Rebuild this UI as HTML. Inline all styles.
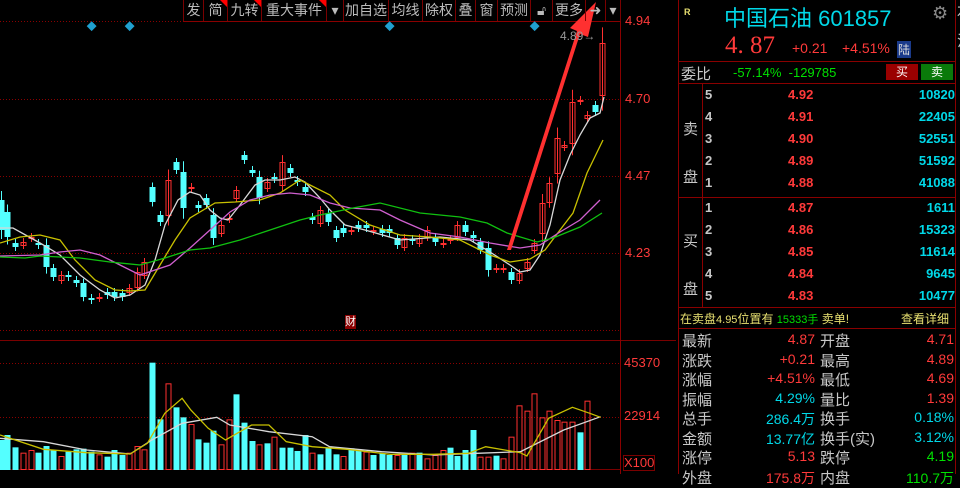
<!DOCTYPE html>
<html><head><meta charset="utf-8"><style>
html,body{margin:0;padding:0;background:#000;width:960px;height:474px;overflow:hidden;font-family:"Liberation Sans","Noto Sans CJK SC",sans-serif}
.a{position:absolute;white-space:nowrap}
#tb{position:absolute;left:183px;top:0;height:21px}
#tb div{position:absolute;top:0;height:21px;border-left:1px solid #7a0000;color:#bbb;font-size:14px;line-height:21px;text-align:center;box-sizing:border-box}
.tri:after{content:"";position:absolute;right:0;top:0;border-top:7px solid #f00;border-left:7px solid transparent}
.c{color:#00d8e8}.r{color:#ff3a3a}.g{color:#00e000}.w{color:#c8c8c8}.y{color:#e8e070}
</style></head><body>
<svg id="s" width="960" height="474" style="position:absolute;left:0;top:0"></svg>
<div id="tb"></div>
<div class="a r" style="left:625px;top:13px;font-size:13px">4.94</div>
<div class="a r" style="left:625px;top:91px;font-size:13px">4.70</div>
<div class="a r" style="left:625px;top:168px;font-size:13px">4.47</div>
<div class="a r" style="left:625px;top:245px;font-size:13px">4.23</div>
<div class="a r" style="left:624px;top:355px;font-size:13px">45370</div>
<div class="a r" style="left:624px;top:408px;font-size:13px">22914</div>
<div class="a r" style="left:623px;top:455px;font-size:13px;border:1px solid #7a0000;line-height:14px">X100</div>
<div class="a w" style="left:560px;top:29px;font-size:12px;color:#999">4.89→</div>
<div class="a" style="left:345px;top:315px;font-size:11px;background:#8a0000;color:#fff;line-height:14px">财</div>
<div class="a y" style="left:684px;top:7px;font-size:9px;font-weight:bold">R</div>
<div class="a c" style="left:724px;top:1px;font-size:22px">中国石油 601857</div>
<div class="a" style="left:932px;top:3px;font-size:18px;color:#888">⚙</div>
<div class="a r" style="left:725px;top:32px;font-size:25px;font-family:'Liberation Serif',serif">4. 87</div>
<div class="a r" style="left:792px;top:40px;font-size:14px">+0.21</div>
<div class="a r" style="left:842px;top:40px;font-size:14px">+4.51%</div>
<div class="a" style="left:897px;top:41px;font-size:12px;background:#1a3a8a;color:#ddd;padding:0 1px">陆</div>
<div class="a w" style="left:681px;top:63px;font-size:15px">委比</div>
<div class="a g" style="left:733px;top:65px;font-size:13px">-57.14%&nbsp;&nbsp;-129785</div>
<div class="a" style="left:886px;top:64px;width:32px;height:16px;background:#9a0000;color:#fff;font-size:12px;text-align:center;line-height:16px">买</div>
<div class="a" style="left:921px;top:64px;width:32px;height:16px;background:#0a7a0a;color:#fff;font-size:12px;text-align:center;line-height:16px">卖</div>
<div class="a w" style="left:683px;top:106px;font-size:15px;line-height:48px">卖<br>盘</div>
<div class="a w" style="left:683px;top:218px;font-size:15px;line-height:48px">买<br>盘</div>
<div id="book"></div>
<div class="a y" style="left:680px;top:310px;font-size:12px">在卖盘<span style="font-size:11px">4.95</span>位置有 <span class="g" style="font-size:11px">15333手</span> 卖单!</div>
<div class="a y" style="left:901px;top:310px;font-size:12px">查看详细</div>
<div id="tbl"></div>
<script>
var tb=[['发',183,203],['简',203,227,1],['九转',227,261,1],['重大事件',261,326,1],['▾',326,343],['加自选',343,388],['均线',388,422],['除权',422,455],['叠',455,475],['窗',475,497],['预测',497,530],['🔓︎',530,552],['更多',552,585],['➜',585,605],['▾',605,620]],tt='';
tb.forEach(b=>tt+=`<div class="${b[3]?'tri':''}" style="left:${b[1]-183}px;width:${b[2]-b[1]}px">${b[0]}</div>`);
tt+=`<div style="left:437px;width:1px"></div>`;
document.getElementById('tb').innerHTML=tt;
var s=document.getElementById('s'),h='';
function L(x1,y1,x2,y2,c,d,w){h+=`<line x1="${x1}" y1="${y1}" x2="${x2}" y2="${y2}" stroke="${c}" stroke-width="${w||1}" ${d?'stroke-dasharray="1 2"':''}/>`}
[21,99,176,253,330,363,417].forEach(y=>L(0,y+.5,620,y+.5,'#8a0000',1));
L(183,21.5,620,21.5,'#8a0000');
L(0,340.5,676,340.5,'#7a0000');
L(620.5,0,620.5,474,'#8a0000');
L(678.5,0,678.5,474,'#8a0000');
L(955.5,0,955.5,474,'#8a0000');
[61,83,197,307,328].forEach(y=>L(678,y+.5,956,y+.5,'#8a0000'));
L(702.5,83,702.5,307,'#8a0000');
L(0,469.5,620,469.5,'#7a0000');
[92,130,390,535].forEach(x=>h+=`<rect x="${x-4}" y="${23}" width="7" height="7" fill="#20a0d0" transform="rotate(45 ${x} 26.5)"/>`);
var C=[[1,200,230,'c'],[7,212,237,'c'],[15,243,247,'c'],[23,242,245,'r'],[31,237,238,'r'],[38,243,245,'c'],[46,245,267,'c'],[53,268,277,'c'],[61,275,280,'r'],[68,275,277,'c'],[76,280,283,'c'],[83,283,297,'c'],[91,298,300,'c'],[99,297,298,'r'],[107,292,295,'c'],[114,292,297,'c'],[122,293,297,'c'],[129,288,292,'r'],[137,272,287,'r'],[144,262,275,'r'],[152,187,202,'c'],[160,215,222,'c'],[168,180,215,'r'],[176,162,170,'c'],[183,172,208,'c'],[191,187,188,'r'],[198,205,208,'c'],[206,198,205,'c'],[213,215,238,'c'],[221,225,233,'r'],[229,218,219,'r'],[236,190,198,'r'],[244,155,160,'c'],[252,170,173,'c'],[259,177,198,'c'],[267,182,188,'r'],[274,177,179,'c'],[282,162,185,'r'],[290,168,173,'c'],[297,180,182,'c'],[305,187,192,'c'],[312,217,220,'c'],[320,210,223,'r'],[328,213,222,'c'],[336,230,238,'c'],[343,228,233,'c'],[351,230,231,'r'],[358,225,228,'c'],[366,225,228,'c'],[373,230,231,'r'],[382,229,233,'c'],[389,229,233,'c'],[397,238,245,'c'],[404,238,247,'r'],[412,239,241,'c'],[419,238,243,'r'],[427,230,237,'r'],[435,237,242,'c'],[443,243,244,'r'],[450,239,240,'r'],[457,225,237,'r'],[465,225,232,'c'],[473,235,238,'c'],[480,242,250,'c'],[488,248,270,'c'],[496,268,269,'r'],[503,268,269,'r'],[511,272,280,'c'],[519,273,280,'r'],[527,262,268,'r'],[534,243,250,'r'],[542,203,233,'r'],[549,183,202,'r'],[557,138,173,'r'],[564,145,147,'r'],[572,102,143,'r'],[580,100,101,'r'],[587,115,118,'r'],[595,105,112,'c'],[602,43,95,'r']];
C.forEach(c=>{var col=c[3]=='c'?'#54ffff':'#ff3030';var e=Math.max(4,(c[2]-c[1])*.3);
L(c[0]+.5,c[1]-e,c[0]+.5,c[2]+e,col);
if(c[3]=='c')h+=`<rect x="${c[0]-2.5}" y="${c[1]}" width="6" height="${Math.max(1,c[2]-c[1])}" fill="${col}"/>`;
else h+=`<rect x="${c[0]-2}" y="${c[1]+.5}" width="5" height="${Math.max(1,c[2]-c[1])}" fill="none" stroke="${col}"/>`;});
function P(pts,c){h+=`<polyline points="${pts}" fill="none" stroke="${c}" stroke-width="1.3"/>`}
P("0,228 13,228 40,243 60,255 80,275 100,290 115,298 130,295 145,285 155,260 165,225 178,200 190,192 200,195 210,210 220,218 228,220 240,205 255,185 265,180 280,180 295,177 305,182 320,198 330,210 345,225 365,230 400,240 440,237 470,240 490,252 510,265 520,272 530,270 540,255 550,225 560,180 570,155 580,135 590,118 600,113 604,97","#d8d8d8");
P("0,243 20,237 40,235 60,240 75,260 95,280 115,290 130,291 145,290 160,265 175,240 190,218 215,203 235,202 260,200 280,193 300,180 310,185 330,195 345,210 370,225 400,235 430,237 460,240 490,255 510,262 530,259 545,250 560,230 573,213 587,173 603,140","#c8c000");
P("0,256 40,255 60,252 80,250 100,255 120,265 140,275 155,270 170,265 190,248 210,230 230,212 250,200 270,195 290,193 310,195 330,203 350,208 380,210 400,220 430,233 460,237 490,243 520,248 540,245 560,232 580,220 600,200","#d060d0");
P("0,257 25,258 40,256 80,258 110,262 140,265 165,258 190,250 210,248 240,240 270,230 300,220 320,215 353,208 380,203 420,213 460,217 487,223 507,233 537,242 553,238 580,227 602,213","#10c010");
h+=`<polygon points="507,250 511,250 580,34 588,37 596,2 570,28 577,31" fill="#ff3030"/>`;
var V="c330 c315 c352 r368 r360 c368 c348 c360 r378 c365 c358 c356 c365 r373 c380 c360 c375 r368 r348 r358 c98 c268 r160 c232 c262 r282 c328 c338 c302 r343 r268 c193 c278 c333 r343 c340 r320 c353 c353 c363 c315 r368 c373 c355 c373 r378 c355 c358 r365 c375 c370 c375 r375 c375 r368 c368 r385 r375 r360 c353 c378 c360 c300 r380 r380 c377 r385 r320 r226 r242 r190 r262 r242 r270 r275 r275 c307 r212".split(' ');
V.forEach((v,i)=>{var x=C[i]?C[i][0]:i*7.63;var t=330+(+v.slice(1))/3;var col=v[0]=='c'?'#54ffff':'#ff3030';
if(v[0]=='c')h+=`<rect x="${x-2.5}" y="${t}" width="6" height="${470-t}" fill="${col}"/>`;else h+=`<rect x="${x-2}" y="${t+.5}" width="5" height="${469-t}" fill="none" stroke="${col}"/>`;});
function VP(a,c){P(a.map(p=>(p[0]/2.306).toFixed(1)+','+(330+p[1]/3).toFixed(1)).join(' '),c)}
VP([[0,325],[100,335],[200,360],[300,372],[350,330],[420,280],[500,262],[530,285],[620,305],[720,320],[760,350],[880,365],[1000,375],[1100,370],[1200,365],[1300,300],[1385,260]],'#d8d8d8');
VP([[0,315],[100,358],[200,368],[300,372],[340,340],[380,250],[420,205],[440,240],[480,295],[520,330],[580,285],[620,285],[660,335],[720,350],[800,358],[900,373],[1000,373],[1080,370],[1120,350],[1200,368],[1215,378],[1265,265],[1320,232],[1360,250],[1385,262]],'#c8c000');
s.innerHTML=h;
var b='',rows=[['5','4.92','10820'],['4','4.91','22405'],['3','4.90','52551'],['2','4.89','51592'],['1','4.88','41088'],['1','4.87','1611'],['2','4.86','15323'],['3','4.85','11614'],['4','4.84','9645'],['5','4.83','10477']];
rows.forEach((r,i)=>{var y=(i<5?87:200)+i%5*22;
b+=`<div class="a w" style="left:705px;top:${y}px;font-size:13px;font-weight:bold">${r[0]}</div><div class="a r" style="left:788px;top:${y}px;font-size:13px;font-weight:bold">${r[1]}</div><div class="a c" style="right:5px;top:${y}px;font-size:13px;font-weight:bold;text-align:right">${r[2]}</div>`});
document.getElementById('book').innerHTML=b;
var T=[['最新','4.87','r','开盘','4.71','r'],['涨跌','+0.21','r','最高','4.89','r'],['涨幅','+4.51%','r','最低','4.69','r'],['振幅','4.29%','c','量比','1.39','r'],['总手','286.4万','c','换手','0.18%','c'],['金额','13.77亿','c','换手(实)','3.12%','c'],['涨停','5.13','r','跌停','4.19','g'],['外盘','175.8万','r','内盘','110.7万','g']],t='';
T.forEach((r,i)=>{var y=330+i*19.5;
t+=`<div class="a w" style="left:682px;top:${y}px;font-size:15px">${r[0]}</div><div class="a ${r[2]}" style="left:740px;width:75px;text-align:right;top:${y+1}px;font-size:14px">${r[1]}</div><div class="a w" style="left:820px;top:${y}px;font-size:15px">${r[3]}</div><div class="a ${r[5]}" style="right:6px;text-align:right;top:${y+1}px;font-size:14px">${r[4]}</div>`});
document.getElementById('tbl').innerHTML=t;
</script>
<div class="a w" style="left:957px;top:2px;font-size:15px">石</div>
<div class="a w" style="left:957px;top:30px;font-size:15px">油</div>
</body></html>
